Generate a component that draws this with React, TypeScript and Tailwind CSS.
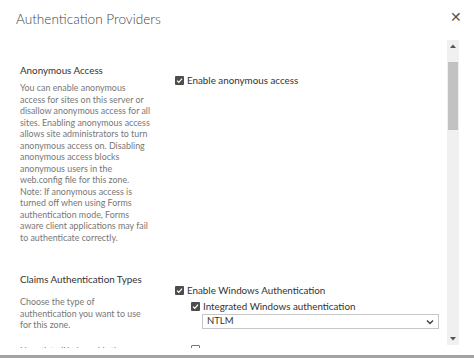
import React from 'react'

const anonLines = [
  'You can enable anonymous',
  'access for sites on this server or',
  'disallow anonymous access for all',
  'sites. Enabling anonymous access',
  'allows site administrators to turn',
  'anonymous access on. Disabling',
  'anonymous access blocks',
  'anonymous users in the',
  'web.config file for this zone.',
  'Note: If anonymous access is',
  'turned off when using Forms',
  'authentication mode, Forms',
  'aware client applications may fail',
  'to authenticate correctly.',
]

const claimsLines = ['Choose the type of', 'authentication you want to use', 'for this zone.']

const Check = ({ checked = true }: { checked?: boolean }) => (
  <span
    className={
      checked
        ? 'w-[9px] h-[9px] rounded-[1px] bg-[#4d4d4d] flex items-center justify-center shrink-0'
        : 'w-[9px] h-[9px] rounded-[1px] border border-[#777] bg-white shrink-0 block'
    }
  >
    {checked && (
      <svg width="7" height="7" viewBox="0 0 10 10">
        <path d="M1.5 5.2 L4 7.6 L8.6 2.4" fill="none" stroke="white" strokeWidth="1.8" />
      </svg>
    )}
  </span>
)

const Lines = ({ lines }: { lines: string[] }) => (
  <div className="text-[8.9px] leading-[11.5px] text-[#777] whitespace-nowrap">
    {lines.map((l) => (
      <div key={l}>{l}</div>
    ))}
  </div>
)

export default function App() {
  return (
    <div className="w-[474px] h-[358px] bg-white flex flex-col overflow-hidden font-['Lato',sans-serif]">
      <div className="h-[40px] shrink-0 flex items-start justify-between pl-4 pr-[12px] pt-[8px]">
        <div className="text-[13.6px] leading-[22px] font-light text-[#444]">Authentication Providers</div>
        <div className="text-[14px] leading-[14px] text-[#555] pt-[2px]">✕</div>
      </div>

      <div className="flex h-[308px] shrink-0">
        <div className="flex-1 overflow-hidden pl-5 pt-[23px]">
          {/* anonymous access */}
          <div className="flex">
            <div className="w-[155px] shrink-0">
              <div className="text-[9.8px] leading-[14px] text-[#333]">Anonymous Access</div>
              <div className="mt-[5px]">
                <Lines lines={anonLines} />
              </div>
            </div>
            <div className="pt-[10px]">
              <label className="flex items-center gap-[3px] text-[9.8px] leading-[14px] text-[#333] whitespace-nowrap">
                <Check />
                Enable anonymous access
              </label>
            </div>
          </div>

          {/* claims */}
          <div className="flex mt-[29px]">
            <div className="w-[155px] shrink-0">
              <div className="text-[9.8px] leading-[14px] text-[#333]">Claims Authentication Types</div>
              <div className="mt-[10px]">
                <Lines lines={claimsLines} />
              </div>
              <div className="mt-[14px]">
                <Lines lines={['Negotiate (Kerberos) is the']} />
              </div>
            </div>
            <div className="pt-[11px] flex-1 pr-[8px]">
              <label className="flex items-center gap-[3px] text-[9.8px] leading-[14px] text-[#333] whitespace-nowrap">
                <Check />
                Enable Windows Authentication
              </label>
              <div className="pl-4 mt-[2px]">
                <label className="flex items-center gap-[3px] text-[9.8px] leading-[14px] text-[#333] whitespace-nowrap">
                  <Check />
                  Integrated Windows authentication
                </label>
                <div className="ml-[11px] mt-[1px] h-[15px] border border-[#c6c6c6] flex items-center justify-between px-[4px] text-[9.5px] text-[#333]">
                  <span>NTLM</span>
                  <svg width="8" height="6" viewBox="0 0 8 6">
                    <path d="M1 1.5 L4 4.5 L7 1.5" fill="none" stroke="#444" strokeWidth="1.5" />
                  </svg>
                </div>
                <div className="mt-[16px]">
                  <Check checked={false} />
                </div>
              </div>
            </div>
          </div>
        </div>

        {/* scrollbar */}
        <div className="w-[12px] h-[305px] mr-[15px] bg-[#f0f0f0] flex flex-col items-center shrink-0">
          <div className="h-[12px] flex items-center justify-center">
            <svg width="6" height="4" viewBox="0 0 6 4">
              <path d="M0 4 L3 0.5 L6 4 Z" fill="#555" />
            </svg>
          </div>
          <div className="mt-[10px] w-[10px] h-[68px] bg-[#c2c2c2]" />
          <div className="flex-1" />
          <div className="h-[12px] flex items-center justify-center">
            <svg width="6" height="4" viewBox="0 0 6 4">
              <path d="M0 0 L3 3.5 L6 0 Z" fill="#555" />
            </svg>
          </div>
        </div>
      </div>

      <div className="h-[7px] shrink-0" />
      <div className="h-[3px] shrink-0 bg-[#a3a3a3]" />
    </div>
  )
}
